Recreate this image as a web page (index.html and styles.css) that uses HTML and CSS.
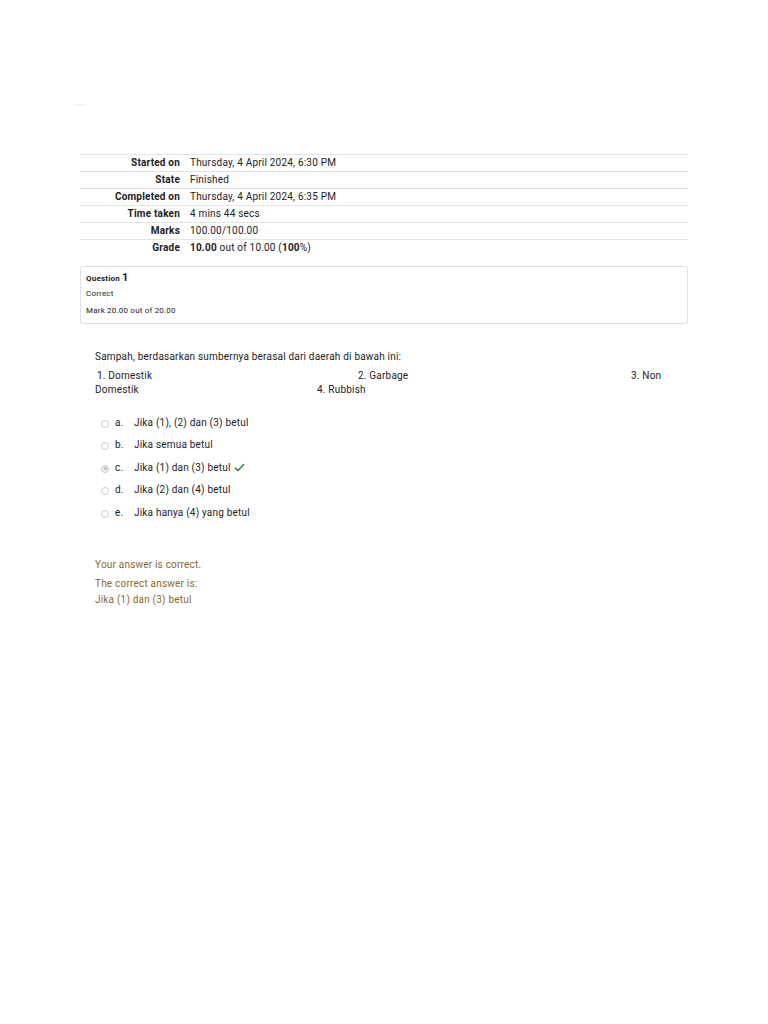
FILE: index.html
```html
<!DOCTYPE html>
<html>
<head>
<meta charset="utf-8">
<link rel="stylesheet" href="styles.css">
</head>
<body>
<div class="page">
  <div class="ghost"></div>
  <table class="summary">
    <tr><th>Started on</th><td>Thursday, 4 April 2024, 6:30 PM</td></tr>
    <tr><th>State</th><td>Finished</td></tr>
    <tr><th>Completed on</th><td>Thursday, 4 April 2024, 6:35 PM</td></tr>
    <tr><th>Time taken</th><td>4 mins 44 secs</td></tr>
    <tr><th>Marks</th><td>100.00/100.00</td></tr>
    <tr><th>Grade</th><td><b>10.00</b> out of 10.00 (<b>100</b>%)</td></tr>
  </table>

  <div class="info">
    <div class="qno">Question <span class="num">1</span></div>
    <div class="state">Correct</div>
    <div class="grade">Mark 20.00 out of 20.00</div>
  </div>

  <div class="content">
    <p class="qtext">Sampah, berdasarkan sumbernya berasal dari daerah di bawah ini:</p>
    <div class="items">
      <div class="line"><span class="i1">1. Domestik</span><span class="i2">2. Garbage</span><span class="i3">3. Non</span></div>
      <div class="line"><span class="i4">Domestik</span><span class="i5">4. Rubbish</span></div>
    </div>
    <div class="answers">
      <div class="opt"><span class="radio"></span><span class="letter">a.</span><span>Jika (1), (2) dan (3) betul</span></div>
      <div class="opt"><span class="radio"></span><span class="letter">b.</span><span>Jika semua betul</span></div>
      <div class="opt"><span class="radio checked"></span><span class="letter">c.</span><span>Jika (1) dan (3) betul</span><svg class="tick" viewBox="0 0 12 10" width="11" height="9"><path d="M1 5.2 L4.3 8.4 L11 1.4" fill="none" stroke="#357a32" stroke-width="1.5"/></svg></div>
      <div class="opt"><span class="radio"></span><span class="letter">d.</span><span>Jika (2) dan (4) betul</span></div>
      <div class="opt"><span class="radio"></span><span class="letter">e.</span><span>Jika hanya (4) yang betul</span></div>
    </div>
    <div class="feedback">
      <div class="fb1">Your answer is correct.</div>
      <div class="fb2">The correct answer is:<br>Jika (1) dan (3) betul</div>
    </div>
  </div>
</div>
</body>
</html>
```

FILE: styles.css
```css
html, body {
  margin: 0;
  padding: 0;
  background: #fff;
}
body {
  font-family: Roboto, "Liberation Sans", sans-serif;
  color: #1d2125;
  font-size: 10px;
  letter-spacing: 0.2px;
}
.page {
  width: 608px;
  margin-left: 80px;
  padding-top: 104px;
}
.ghost {
  width: 8px;
  height: 1px;
  margin-left: -4px;
  background: #f1f1f1;
  margin-bottom: 49px;
}
.summary {
  width: 100%;
  border-collapse: collapse;
}
.summary th,
.summary td {
  border-top: 1px solid #e3e4e6;
  height: 16px;
  padding: 0;
  line-height: 16px;
  vertical-align: middle;
}
.summary th {
  width: 100px;
  text-align: right;
  font-weight: 700;
  padding-right: 10px;
}
.info {
  margin-top: 10px;
  border: 1px solid #dee2e6;
  border-radius: 2px;
  padding: 5px 5px 6px 5px;
  height: 45px;
  color: #1d2125;
}
.qno {
  font-size: 8px;
  font-weight: 700;
  line-height: 12px;
}
.qno .num {
  font-size: 11px;
}
.state {
  font-size: 8px;
  line-height: 12px;
  margin-top: 3px;
}
.grade {
  font-size: 8px;
  line-height: 12px;
  margin-top: 5px;
}
.content {
  padding-left: 15px;
  padding-top: 26px;
}
.qtext {
  margin: 0;
  line-height: 14px;
}
.items {
  margin-top: 5px;
  line-height: 14px;
}
.line {
  display: flex;
}
.i1 { margin-left: 2px; width: 261px; }
.i2 { width: 273px; }
.i4 { width: 222px; }
.answers {
  margin-top: 14px;
}
.opt {
  display: flex;
  align-items: center;
  height: 22.5px;
}
.radio {
  width: 8px;
  height: 8px;
  border: 1px solid #c9ccd0;
  border-radius: 50%;
  margin-left: 6px;
  margin-right: 6px;
  margin-top: 3px;
  box-sizing: border-box;
  background: #fff;
  position: relative;
}
.radio.checked {
  background: #eef0f2;
}
.radio.checked::after {
  content: "";
  position: absolute;
  left: 1.5px;
  top: 1.5px;
  width: 3px;
  height: 3px;
  border-radius: 50%;
  background: #b7bbc0;
}
.letter {
  width: 19px;
}
.tick {
  margin-left: 3px;
}
.feedback {
  margin-top: 33px;
  color: #8e662e;
  line-height: 16px;
}
.fb2 {
  margin-top: 3px;
}
```
